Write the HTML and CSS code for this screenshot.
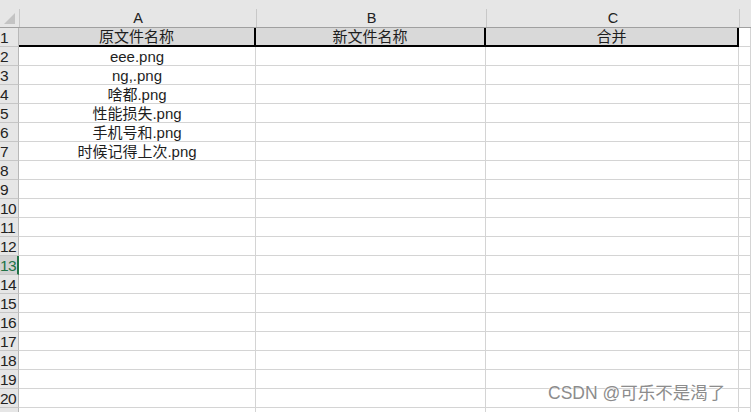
FILE: index.html
```html
<!DOCTYPE html>
<html lang="zh">
<head>
<meta charset="utf-8">
<title>Sheet</title>
<link rel="stylesheet" href="styles.css">
</head>
<body>
<div class="sheet">
  <div class="corner"><span class="tri"></span></div>
  <div class="ch"><div class="chi">A</div></div>
  <div class="ch"><div class="chi">B</div></div>
  <div class="ch"><div class="chi">C</div></div>
  <div class="ch"><div class="chi"></div></div>

  <div class="rh"><span>1</span></div>
  <div class="c hd">原文件名称</div>
  <div class="c hd">新文件名称</div>
  <div class="c hd">合并</div>
  <div class="c"></div>

  <div class="rh"><span>2</span></div><div class="c">eee.png</div><div class="c"></div><div class="c"></div><div class="c"></div>
  <div class="rh"><span>3</span></div><div class="c">ng,.png</div><div class="c"></div><div class="c"></div><div class="c"></div>
  <div class="rh"><span>4</span></div><div class="c">啥都.png</div><div class="c"></div><div class="c"></div><div class="c"></div>
  <div class="rh"><span>5</span></div><div class="c">性能损失.png</div><div class="c"></div><div class="c"></div><div class="c"></div>
  <div class="rh"><span>6</span></div><div class="c">手机号和.png</div><div class="c"></div><div class="c"></div><div class="c"></div>
  <div class="rh"><span>7</span></div><div class="c">时候记得上次.png</div><div class="c"></div><div class="c"></div><div class="c"></div>
  <div class="rh"><span>8</span></div><div class="c"></div><div class="c"></div><div class="c"></div><div class="c"></div>
  <div class="rh"><span>9</span></div><div class="c"></div><div class="c"></div><div class="c"></div><div class="c"></div>
  <div class="rh"><span>10</span></div><div class="c"></div><div class="c"></div><div class="c"></div><div class="c"></div>
  <div class="rh"><span>11</span></div><div class="c"></div><div class="c"></div><div class="c"></div><div class="c"></div>
  <div class="rh"><span>12</span></div><div class="c"></div><div class="c"></div><div class="c"></div><div class="c"></div>
  <div class="rh sel"><span>13</span></div><div class="c"></div><div class="c"></div><div class="c"></div><div class="c"></div>
  <div class="rh"><span>14</span></div><div class="c"></div><div class="c"></div><div class="c"></div><div class="c"></div>
  <div class="rh"><span>15</span></div><div class="c"></div><div class="c"></div><div class="c"></div><div class="c"></div>
  <div class="rh"><span>16</span></div><div class="c"></div><div class="c"></div><div class="c"></div><div class="c"></div>
  <div class="rh"><span>17</span></div><div class="c"></div><div class="c"></div><div class="c"></div><div class="c"></div>
  <div class="rh"><span>18</span></div><div class="c"></div><div class="c"></div><div class="c"></div><div class="c"></div>
  <div class="rh"><span>19</span></div><div class="c"></div><div class="c"></div><div class="c"></div><div class="c"></div>
  <div class="rh"><span>20</span></div><div class="c"></div><div class="c"></div><div class="c"></div><div class="c"></div>
  <div class="rh"></div><div class="c"></div><div class="c"></div><div class="c"></div><div class="c"></div>
</div>
<div class="watermark">CSDN @可乐不是渴了</div>
</body>
</html>
```
FILE: styles.css
```css
html, body {
  margin: 0;
  padding: 0;
  width: 751px;
  height: 412px;
  overflow: hidden;
  background: #ffffff;
}
body {
  position: relative;
  font-family: "Liberation Sans", "Noto Sans CJK SC", sans-serif;
  font-size: 15px;
  color: #1e1e1e;
}
.sheet {
  display: grid;
  grid-template-columns: 19px 237px 230px 253px 1fr;
  grid-template-rows: 28px;
  grid-auto-rows: 19px;
  width: 751px;
}
.sheet > div {
  box-sizing: border-box;
  overflow: hidden;
  white-space: nowrap;
}
.corner {
  background: #e6e6e6;
  border-bottom: 1px solid #a0a0a0;
  padding-top: 9px;
}
.corner .tri {
  display: block;
  margin: 4px 0 0 4px;
  width: 0;
  height: 0;
  border-left: 11px solid transparent;
  border-bottom: 11px solid #c3c3c3;
}
.ch {
  background: #e6e6e6;
  border-bottom: 1px solid #a0a0a0;
  padding-top: 9px;
}
.chi {
  height: 18px;
  line-height: 18px;
  border-left: 1px solid #c8c8c8;
  text-align: center;
  font-size: 14.5px;
  color: #222;
}
.rh {
  background: #e6e6e6;
  border-bottom: 1px solid #c6c6c6;
  border-right: 1px solid #b8b8b8;
  line-height: 19px;
  font-size: 15.5px;
  color: #222;
}
.rh span {
  display: block;
  padding-left: 0;
  letter-spacing: -0.5px;
}
.rh.sel {
  background: #d2d2d2;
  color: #217346;
  border-right: 2px solid #217346;
}
.c {
  border-right: 1px solid #d4d4d4;
  border-bottom: 1px solid #d4d4d4;
  text-align: center;
  line-height: 20px;
}
.hd {
  background: #d9d9d9;
  border-bottom: 2px solid #000;
  border-right: 2px solid #000;
  line-height: 18px;
}
.watermark {
  position: absolute;
  left: 548px;
  top: 382px;
  font-family: "Liberation Sans", "Noto Sans CJK SC", sans-serif;
  font-size: 17.5px;
  line-height: 22px;
  color: #8c8c8c;
  text-shadow: 0 0 1px #ffffff, 0 0 2px #ffffff;
  white-space: nowrap;
}
```
